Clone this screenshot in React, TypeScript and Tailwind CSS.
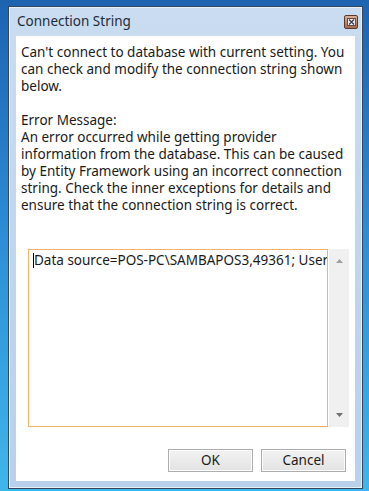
const font = { fontFamily: '"Noto Sans", "Open Sans", sans-serif' };

const App = () => {
  return (
    <div
      className="w-[369px] h-[491px] overflow-hidden bg-gradient-to-b from-[#1d63b0] via-[#2f8fd6] to-[#3fb6ea] pt-[6px] pl-[8px] pr-[6px] pb-[2px]"
      style={font}
    >
      <div className="h-full flex flex-col border border-[#33485e] bg-gradient-to-b from-[#c9dcf0] to-[#b8d0ea] shadow-[inset_0_0_0_1px_#e8f0fa]">
        {/* Title bar */}
        <div className="h-[29px] flex items-center justify-between pl-[8px] pr-[4px]">
          <span className="text-[13.5px] text-[#1e2b3a] leading-none">Connection String</span>
          <div className="w-[14px] h-[14px] rounded-[2px] border border-[#5b3a2c] bg-gradient-to-b from-[#d9b29a] to-[#a66a52] flex items-center justify-center">
            <div className="w-[9px] h-[8px] bg-[#f2f2f6] border border-[#6d4b3e] flex items-center justify-center">
              <svg width="7" height="6" viewBox="0 0 7 6">
                <path d="M1 0.5 L6 5.5 M6 0.5 L1 5.5" stroke="#3a3a4a" strokeWidth="1.3" />
              </svg>
            </div>
          </div>
        </div>

        {/* Content */}
        <div className="flex-1 mx-[7px] mb-[7px] bg-white flex flex-col pl-[5px] pr-[4px] pt-[8px]">
          <div className="text-[13.5px] leading-[17px] text-[#1a1a1a] whitespace-nowrap">
            <p>Can't connect to database with current setting. You</p>
            <p>can check and modify the connection string shown</p>
            <p>below.</p>
            <p>&nbsp;</p>
            <p>Error Message:</p>
            <p>An error occurred while getting provider</p>
            <p>information from the database. This can be caused</p>
            <p>by Entity Framework using an incorrect connection</p>
            <p>string. Check the inner exceptions for details and</p>
            <p>ensure that the connection string is correct.</p>
          </div>

          <div className="mt-[35px] ml-[7px] flex h-[178px]">
            <div className="w-[300px] flex border border-[#f6b46a] pl-[4px] pt-[3px]">
              <div className="w-px h-[15px] bg-black shrink-0" />
              <textarea
                readOnly
                wrap="off"
                value="Data source=POS-PC\SAMBAPOS3,49361; User Id=sa"
                className="flex-1 resize-none outline-none overflow-hidden p-0 text-[13.5px] leading-[17px] text-[#1a1a1a] -mt-[1px]"
                style={font}
              />
            </div>
            <div className="w-[20px] ml-[1px] bg-[#f0f0f0] flex flex-col items-center justify-between py-[10px]">
              <svg width="7" height="4" viewBox="0 0 7 4">
                <path d="M0 4 L3.5 0 L7 4 Z" fill="#a0a0a0" />
              </svg>
              <svg width="7" height="4" viewBox="0 0 7 4">
                <path d="M0 0 L7 0 L3.5 4 Z" fill="#707070" />
              </svg>
            </div>
          </div>

          <div className="mt-[22px] flex justify-end gap-[8px] pr-[5px]">
            <button className="w-[85px] h-[23px] border border-[#adadad] bg-gradient-to-b from-[#f2f2f2] to-[#e3e3e3] shadow-[inset_0_0_0_1px_#fcfcfc] text-[13.5px] text-[#1a1a1a] leading-none">
              OK
            </button>
            <button className="w-[85px] h-[23px] border border-[#adadad] bg-gradient-to-b from-[#f2f2f2] to-[#e3e3e3] shadow-[inset_0_0_0_1px_#fcfcfc] text-[13.5px] text-[#1a1a1a] leading-none">
              Cancel
            </button>
          </div>
        </div>
      </div>
    </div>
  );
};

export default App;
